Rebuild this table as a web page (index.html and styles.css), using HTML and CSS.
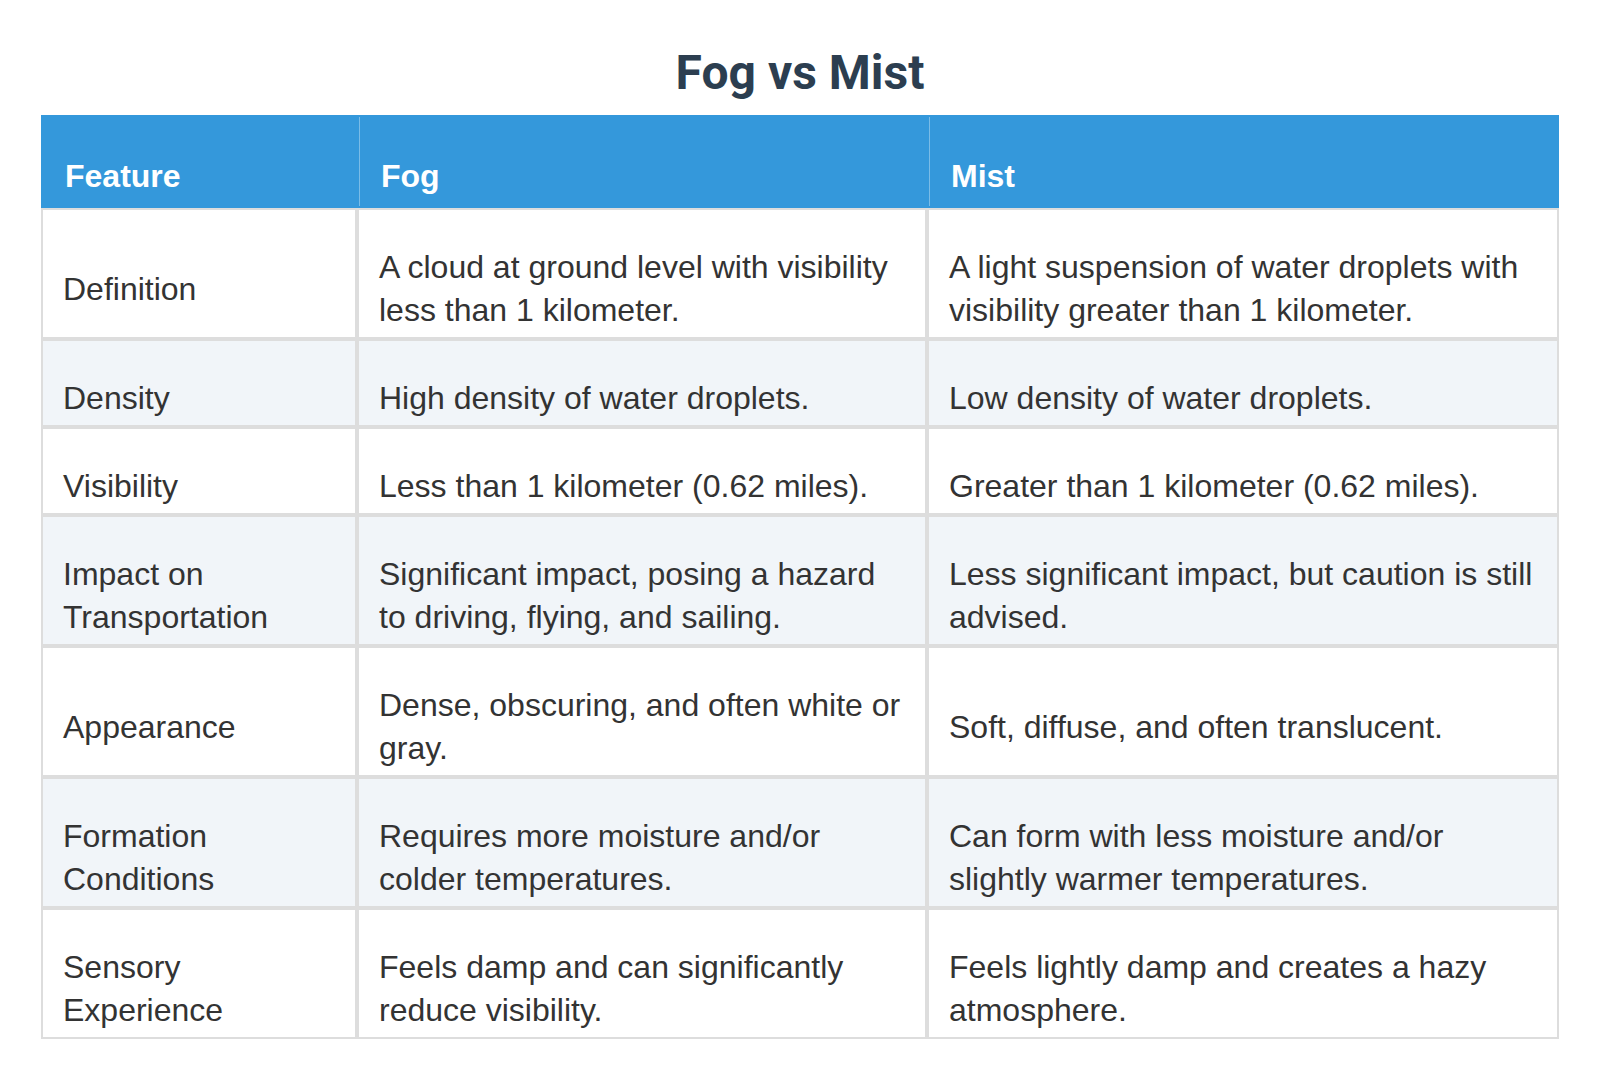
FILE: index.html
```html
<!DOCTYPE html>
<html lang="en">
<head>
<meta charset="utf-8">
<title>Fog vs Mist</title>
<link rel="stylesheet" href="styles.css">
</head>
<body>
<div class="page">
  <h1 class="title">Fog vs Mist</h1>
  <table class="compare">
    <thead>
      <tr>
        <th class="c1">Feature</th>
        <th class="c2">Fog</th>
        <th class="c3">Mist</th>
      </tr>
    </thead>
    <tbody>
      <tr>
        <td>Definition</td>
        <td>A cloud at ground level with visibility less than 1 kilometer.</td>
        <td>A light suspension of water droplets with visibility greater than 1 kilometer.</td>
      </tr>
      <tr>
        <td>Density</td>
        <td>High density of water droplets.</td>
        <td>Low density of water droplets.</td>
      </tr>
      <tr>
        <td>Visibility</td>
        <td>Less than 1 kilometer (0.62 miles).</td>
        <td>Greater than 1 kilometer (0.62 miles).</td>
      </tr>
      <tr>
        <td>Impact on Transportation</td>
        <td>Significant impact, posing a hazard to driving, flying, and sailing.</td>
        <td>Less significant impact, but caution is still advised.</td>
      </tr>
      <tr>
        <td>Appearance</td>
        <td>Dense, obscuring, and often white or gray.</td>
        <td>Soft, diffuse, and often translucent.</td>
      </tr>
      <tr>
        <td>Formation Conditions</td>
        <td>Requires more moisture and/or colder temperatures.</td>
        <td>Can form with less moisture and/or slightly warmer temperatures.</td>
      </tr>
      <tr>
        <td>Sensory Experience</td>
        <td>Feels damp and can significantly reduce visibility.</td>
        <td>Feels lightly damp and creates a hazy atmosphere.</td>
      </tr>
    </tbody>
  </table>
</div>
</body>
</html>
```

FILE: styles.css
```css
html, body {
  margin: 0;
  padding: 0;
  background: #ffffff;
}

body {
  font-family: "Liberation Sans", Arial, Helvetica, sans-serif;
  color: #333333;
}

.page {
  padding: 44px 41px 0;
}

.title {
  font-family: Roboto, "Liberation Sans", Arial, sans-serif;
  font-weight: 700;
  font-size: 48px;
  line-height: 57px;
  color: #2c3e50;
  text-align: center;
  margin: 0 0 14px;
}

.compare {
  width: 1518px;
  border-collapse: separate;
  border-spacing: 0;
  table-layout: fixed;
  font-size: 32px;
  line-height: 43px;
}

.compare th,
.compare td {
  box-sizing: border-box;
  text-align: left;
}

.c1 { width: 316px; }
.c2 { width: 570px; }
.c3 { width: 632px; }

.compare th {
  background: #3498db;
  color: #ffffff;
  font-weight: 700;
  border: 2px solid transparent;
  padding: 38px 20px 8px 22px;
  vertical-align: middle;
}

.compare th + th {
  box-shadow: inset 1px 0 0 rgba(255, 255, 255, 0.35);
}

.compare td {
  border: 2px solid #dddddd;
  padding: 36px 20px 5px;
  vertical-align: middle;
  color: #333333;
}

.compare tbody tr:nth-child(even) td {
  background: #f1f5f9;
}
```
